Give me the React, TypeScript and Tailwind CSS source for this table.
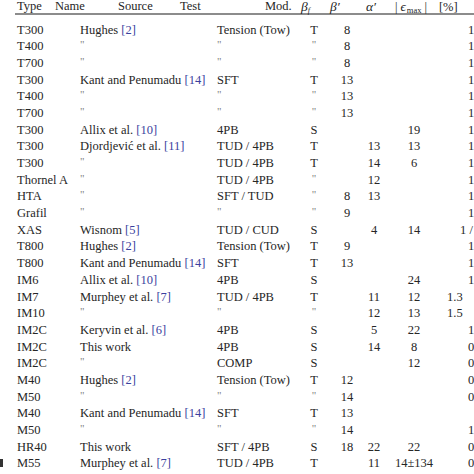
import React from "react";

type Row = {
  type: string;
  src: string;
  ref?: string;
  test: string;
  c1: string;
  c2: string;
  c3: string;
  c4: string;
  c5: string;
  pad: string;
};

const D = '"';

const rows: Row[] = [
  { type: "T300", src: "Hughes", ref: "2", test: "Tension (Tow)", c1: "T", c2: "8", c3: "", c4: "", c5: "1.", pad: "pl-[22px]" },
  { type: "T400", src: D, test: D, c1: D, c2: "8", c3: "", c4: "", c5: "1.", pad: "pl-[22px]" },
  { type: "T700", src: D, test: D, c1: D, c2: "8", c3: "", c4: "", c5: "1.", pad: "pl-[22px]" },
  { type: "T300", src: "Kant and Penumadu", ref: "14", test: "SFT", c1: "T", c2: "13", c3: "", c4: "", c5: "1.", pad: "pl-[22px]" },
  { type: "T400", src: D, test: D, c1: D, c2: "13", c3: "", c4: "", c5: "1.", pad: "pl-[22px]" },
  { type: "T700", src: D, test: D, c1: D, c2: "13", c3: "", c4: "", c5: "1.", pad: "pl-[22px]" },
  { type: "T300", src: "Allix et al.", ref: "10", test: "4PB", c1: "S", c2: "", c3: "", c4: "19", c5: "1.", pad: "pl-[22px]" },
  { type: "T300", src: "Djordjević et al.", ref: "11", test: "TUD / 4PB", c1: "T", c2: "", c3: "13", c4: "13", c5: "1.", pad: "pl-[22px]" },
  { type: "T300", src: D, test: "TUD / 4PB", c1: "T", c2: "", c3: "14", c4: "6", c5: "1.", pad: "pl-[22px]" },
  { type: "Thornel A", src: D, test: "TUD / 4PB", c1: D, c2: "", c3: "12", c4: "", c5: "1.", pad: "pl-[22px]" },
  { type: "HTA", src: D, test: "SFT / TUD", c1: D, c2: "8", c3: "13", c4: "", c5: "1.", pad: "pl-[22px]" },
  { type: "Grafil", src: D, test: D, c1: D, c2: "9", c3: "", c4: "", c5: "1.", pad: "pl-[22px]" },
  { type: "XAS", src: "Wisnom", ref: "5", test: "TUD / CUD", c1: "S", c2: "", c3: "4", c4: "14", c5: "1 / 1.", pad: "pl-[14px]" },
  { type: "T800", src: "Hughes", ref: "2", test: "Tension (Tow)", c1: "T", c2: "9", c3: "", c4: "", c5: "1.", pad: "pl-[22px]" },
  { type: "T800", src: "Kant and Penumadu", ref: "14", test: "SFT", c1: "T", c2: "13", c3: "", c4: "", c5: "1.", pad: "pl-[22px]" },
  { type: "IM6", src: "Allix et al.", ref: "10", test: "4PB", c1: "S", c2: "", c3: "", c4: "24", c5: "1.", pad: "pl-[22px]" },
  { type: "IM7", src: "Murphey et al.", ref: "7", test: "TUD / 4PB", c1: "T", c2: "", c3: "11", c4: "12", c5: "1.3", pad: "pl-[1px]" },
  { type: "IM10", src: D, test: D, c1: D, c2: "", c3: "12", c4: "13", c5: "1.5", pad: "pl-[1px]" },
  { type: "IM2C", src: "Keryvin et al.", ref: "6", test: "4PB", c1: "S", c2: "", c3: "5", c4: "22", c5: "1.", pad: "pl-[22px]" },
  { type: "IM2C", src: "This work", test: "4PB", c1: "S", c2: "", c3: "14", c4: "8", c5: "0.", pad: "pl-[22px]" },
  { type: "IM2C", src: D, test: "COMP", c1: "S", c2: "", c3: "", c4: "12", c5: "0.", pad: "pl-[22px]" },
  { type: "M40", src: "Hughes", ref: "2", test: "Tension (Tow)", c1: "T", c2: "12", c3: "", c4: "", c5: "0.", pad: "pl-[22px]" },
  { type: "M50", src: D, test: D, c1: D, c2: "14", c3: "", c4: "", c5: "0.", pad: "pl-[22px]" },
  { type: "M40", src: "Kant and Penumadu", ref: "14", test: "SFT", c1: "T", c2: "13", c3: "", c4: "", c5: "", pad: "pl-[22px]" },
  { type: "M50", src: D, test: D, c1: D, c2: "14", c3: "", c4: "", c5: "1.", pad: "pl-[22px]" },
  { type: "HR40", src: "This work", test: "SFT / 4PB", c1: "S", c2: "18", c3: "22", c4: "22", c5: "0.", pad: "pl-[22px]" },
  { type: "M55", src: "Murphey et al.", ref: "7", test: "TUD / 4PB", c1: "T", c2: "", c3: "11", c4: "14±134", c5: "0.", pad: "pl-[22px]" },
];

function Cell({ v }: { v: string }) {
  if (v === D) {
    return <span className="text-[11px] text-[#7e7e7e] relative top-[-2px]">"</span>;
  }
  return <>{v}</>;
}

export default function App() {
  return (
    <div
      className="w-[474px] h-[474px] overflow-hidden bg-white text-[#262626] relative"
      style={{ fontFamily: '"Liberation Serif", "Times New Roman", serif' }}
    >
      <div className="grid grid-cols-[17px_38px_63px_62px_85px_36px_29px_36px_29px_1fr] h-[13px] leading-[13px] text-[12.5px] whitespace-nowrap">
        <div />
        <div>Type</div>
        <div>Name</div>
        <div>Source</div>
        <div>Test</div>
        <div>Mod.</div>
        <div className="italic text-[13.5px]">
          β<sub className="text-[8px] italic">f</sub>
        </div>
        <div className="italic text-[13.5px]">β′</div>
        <div className="italic text-[13.5px]">α′</div>
        <div className="flex items-baseline">
          <span>|</span>
          <span className="italic ml-[3px] text-[13px]">ϵ</span>
          <sub className="text-[8.5px] ml-[1px]">max</sub>
          <span className="ml-[3px]">|</span>
          <span className="ml-[12px]">[%]</span>
        </div>
      </div>
      <div className="ml-[15px] h-[1.5px] bg-[#8c8c8c]" />
      <div className="pt-[7px] text-[12.5px] whitespace-nowrap">
        {rows.map((r, i) => (
          <div
            key={i}
            className="grid grid-cols-[17px_63px_137px_83px_28px_38px_16px_64px_1fr] h-[16.7px] leading-[16.7px]"
          >
            <div className="relative">
              {i === rows.length - 1 && (
                <span className="absolute left-0 top-[4px] w-[3px] h-[8px] bg-[#333]" />
              )}
            </div>
            <div>{r.type}</div>
            <div>
              {r.src === D ? (
                <Cell v={D} />
              ) : (
                <>
                  {r.src}
                  {r.ref && (
                    <>
                      {" "}
                      <span className="text-[#3a3f9e]">[{r.ref}]</span>
                    </>
                  )}
                </>
              )}
            </div>
            <div>
              <Cell v={r.test} />
            </div>
            <div className="text-center">
              <Cell v={r.c1} />
            </div>
            <div className="text-center">
              <Cell v={r.c2} />
            </div>
            <div className="flex justify-center">
              <Cell v={r.c3} />
            </div>
            <div className="text-center">
              <Cell v={r.c4} />
            </div>
            <div className={r.pad}>{r.c5}</div>
          </div>
        ))}
      </div>
    </div>
  );
}
